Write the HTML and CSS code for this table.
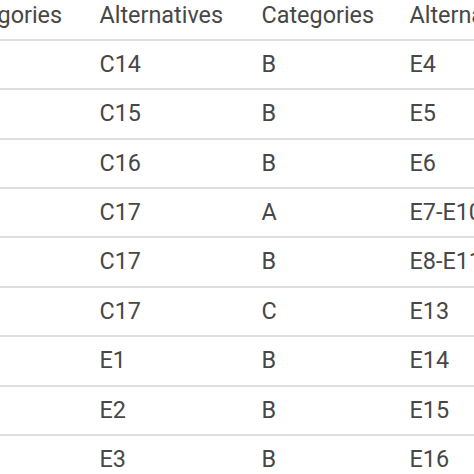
FILE: index.html
```html
<!DOCTYPE html>
<html>
<head>
<meta charset="utf-8">
<link rel="stylesheet" href="styles.css">
</head>
<body>
<div class="crop">
<table class="grid">
  <colgroup>
    <col class="c1"><col class="c2"><col class="c3"><col class="c4">
  </colgroup>
  <thead>
    <tr><th>Categories</th><th>Alternatives</th><th>Categories</th><th>Alternatives</th></tr>
  </thead>
  <tbody>
    <tr><td></td><td>C14</td><td>B</td><td>E4</td></tr>
    <tr><td></td><td>C15</td><td>B</td><td>E5</td></tr>
    <tr><td></td><td>C16</td><td>B</td><td>E6</td></tr>
    <tr><td></td><td>C17</td><td>A</td><td>E7-E10</td></tr>
    <tr><td></td><td>C17</td><td>B</td><td>E8-E11</td></tr>
    <tr><td></td><td>C17</td><td>C</td><td>E13</td></tr>
    <tr><td></td><td>E1</td><td>B</td><td>E14</td></tr>
    <tr><td></td><td>E2</td><td>B</td><td>E15</td></tr>
    <tr><td></td><td>E3</td><td>B</td><td>E16</td></tr>
  </tbody>
</table>
</div>
</body>
</html>
```

FILE: styles.css
```css
html, body {
  margin: 0;
  padding: 0;
  background: #ffffff;
}
.crop {
  width: 474px;
  height: 474px;
  overflow: hidden;
}
.grid {
  border-collapse: separate;
  border-spacing: 0;
  margin: -8.4px 0 0 -50.5px;
  table-layout: fixed;
  width: 674px;
  font-family: Roboto, "Liberation Sans", sans-serif;
  font-size: 23.4px;
  color: #474747;
}
.c1 { width: 150px; }
.c2 { width: 162px; }
.c3 { width: 148px; }
.c4 { width: 214px; }
.grid th,
.grid td {
  padding: 0;
  text-align: left;
  font-weight: 400;
  white-space: nowrap;
  line-height: 47.375px;
  height: 47.375px;
  border-bottom: 2px solid #dedede;
  vertical-align: middle;
}
```
